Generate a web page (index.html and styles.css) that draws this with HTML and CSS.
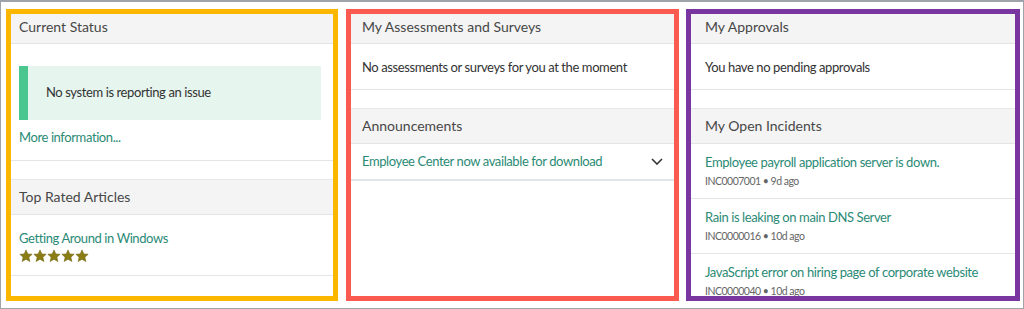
FILE: index.html
```html
<!DOCTYPE html>
<html lang="en">

<head>
    <meta charset="UTF-8" />
    <meta name="viewport" content="width=device-width, initial-scale=1.0" />
    <title>Employee Center</title>

    <link rel="stylesheet" href="styles.css">
</head>

<body>
    <div class="page">
        <div class="column column-orange">
            <section class="panel">
                <h2 class="panel-heading">Current Status</h2>
                <div class="panel-body status-body">
                    <div class="alert">No system is reporting an issue</div>
                    <a class="link" href="#">More information...</a>
                </div>
            </section>
            <section class="panel">
                <h2 class="panel-heading">Top Rated Articles</h2>
                <div class="panel-body article-body">
                    <a class="link" href="#">Getting Around in Windows</a>
                    <div class="stars">
                        <svg class="star" viewBox="0 0 24 24"><path d="M12 1.5l3.1 7 7.4.6-5.6 4.9 1.7 7.4L12 17.5l-6.6 3.9 1.7-7.4-5.6-4.9 7.4-.6z" /></svg>
                        <svg class="star" viewBox="0 0 24 24"><path d="M12 1.5l3.1 7 7.4.6-5.6 4.9 1.7 7.4L12 17.5l-6.6 3.9 1.7-7.4-5.6-4.9 7.4-.6z" /></svg>
                        <svg class="star" viewBox="0 0 24 24"><path d="M12 1.5l3.1 7 7.4.6-5.6 4.9 1.7 7.4L12 17.5l-6.6 3.9 1.7-7.4-5.6-4.9 7.4-.6z" /></svg>
                        <svg class="star" viewBox="0 0 24 24"><path d="M12 1.5l3.1 7 7.4.6-5.6 4.9 1.7 7.4L12 17.5l-6.6 3.9 1.7-7.4-5.6-4.9 7.4-.6z" /></svg>
                        <svg class="star" viewBox="0 0 24 24"><path d="M12 1.5l3.1 7 7.4.6-5.6 4.9 1.7 7.4L12 17.5l-6.6 3.9 1.7-7.4-5.6-4.9 7.4-.6z" /></svg>
                    </div>
                </div>
            </section>
        </div>

        <div class="column column-red">
            <section class="panel">
                <h2 class="panel-heading">My Assessments and Surveys</h2>
                <div class="panel-body empty-body">No assessments or surveys for you at the moment</div>
            </section>
            <section class="panel">
                <h2 class="panel-heading">Announcements</h2>
                <div class="list-row announcement">
                    <a class="link" href="#">Employee Center now available for download</a>
                    <svg class="chevron" viewBox="0 0 12 7"><path d="M1 1l5 5 5-5" /></svg>
                </div>
            </section>
        </div>

        <div class="column column-purple">
            <section class="panel">
                <h2 class="panel-heading">My Approvals</h2>
                <div class="panel-body empty-body">You have no pending approvals</div>
            </section>
            <section class="panel">
                <h2 class="panel-heading">My Open Incidents</h2>
                <div class="list-row incident">
                    <a class="link" href="#">Employee payroll application server is down.</a>
                    <div class="meta">INC0007001 • 9d ago</div>
                </div>
                <div class="list-row incident">
                    <a class="link" href="#">Rain is leaking on main DNS Server</a>
                    <div class="meta">INC0000016 • 10d ago</div>
                </div>
                <div class="list-row incident">
                    <a class="link" href="#">JavaScript error on hiring page of corporate website</a>
                    <div class="meta">INC0000040 • 10d ago</div>
                </div>
            </section>
        </div>
    </div>
</body>

</html>
```

FILE: styles.css
```css
* {
    box-sizing: border-box;
    margin: 0;
    padding: 0;
}

html {
    font-family: Lato, "Open Sans", sans-serif;
}

body {
    background: #fff;
    color: #333;
    font-size: 13px;
    letter-spacing: -0.4px;
    line-height: 19px;
}

.page {
    border: 1px solid #9ea4a9;
    border-top-width: 2px;
    display: grid;
    grid-template-columns: 332px 341px 341px;
    height: 309px;
    overflow: hidden;
    padding: 7px 3px 0 5px;
}

.column {
    --inset: 8px;
    border: 5px solid;
    height: 292px;
    overflow: hidden;
}

.column-orange {
    border-color: #fbb700;
}

.column-red {
    --inset: 11px;
    border-color: #fa5a50;
    margin-left: 8px;
}

.column-purple {
    --inset: 14px;
    border-color: #7a36a0;
    margin-left: 7px;
}

.panel {
    border-bottom: 1px solid #e3e6e9;
    margin-bottom: 18px;
}

.panel-heading {
    background: #f4f4f4;
    border-bottom: 1px solid #e1e5e8;
    border-top: 1px solid #e6e9eb;
    color: #474747;
    font-size: 14px;
    font-weight: 400;
    letter-spacing: 0;
    line-height: 19px;
    padding: 7px var(--inset) 8px;
}

.panel:first-child .panel-heading {
    border-top: none;
    padding-bottom: 7px;
    padding-top: 3px;
}

.panel-body {
    padding: 14px var(--inset) 12px;
}

.status-body {
    padding-bottom: 13px;
    padding-top: 22px;
}

.alert {
    background: #e6f6ee;
    border-left: 9px solid #4ac68e;
    margin: 0 4px 8px 0;
    padding: 17px 18px 18px;
}

.link {
    color: #2b8a76;
    display: block;
    text-decoration: none;
}

.stars {
    display: flex;
    margin-top: 1px;
}

.star {
    fill: #8a7d14;
    height: 14px;
    stroke: #6e6410;
    stroke-width: 1;
    width: 14px;
}

.list-row {
    border-bottom: 1px solid #e3e6e9;
    padding: 8px var(--inset);
}

.announcement {
    align-items: center;
    display: flex;
    justify-content: space-between;
}

.chevron {
    fill: none;
    height: 7px;
    stroke: #333;
    stroke-width: 1.6;
    width: 12px;
}

.incident {
    padding-bottom: 8px;
    padding-top: 9px;
}

.meta {
    color: #666;
    font-size: 10.5px;
    letter-spacing: -0.5px;
    line-height: 17px;
    margin-top: 1px;
}
```
